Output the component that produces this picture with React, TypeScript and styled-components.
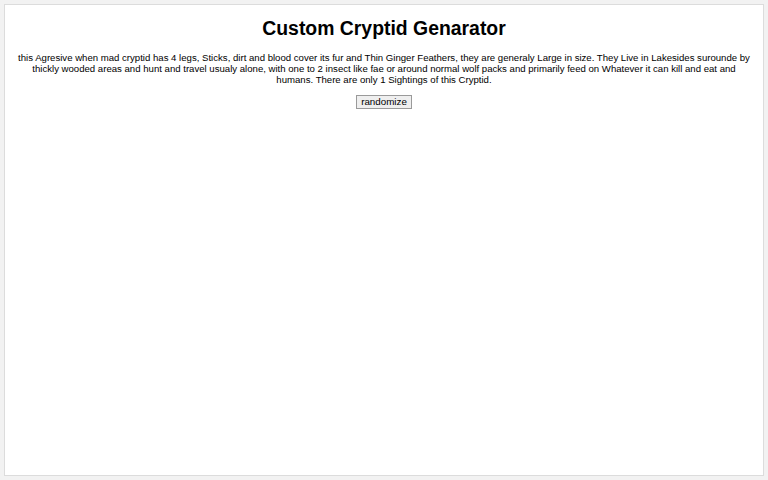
import React, { useState } from "react";
import styled, { createGlobalStyle } from "styled-components";

const Global = createGlobalStyle`
  html, body { margin: 0; padding: 0; }
  body {
    background: #f2f2f2;
    font-family: "Liberation Sans", Arial, sans-serif;
    color: #000;
  }
`;

const Page = styled.div`
  padding: 4px;
  height: 480px;
  box-sizing: border-box;
  display: flex;
`;

const Card = styled.main`
  flex: 1;
  background: #fff;
  border: 1px solid #dcdcdc;
  display: flex;
  flex-direction: column;
  align-items: center;
  padding: 0 13px;
`;

const Title = styled.h1`
  margin: 12px 0 0;
  font-size: 19.4px;
  font-weight: bold;
  line-height: 23px;
`;

const Story = styled.p`
  margin: 12px 0 0;
  font-size: 9.6px;
  line-height: 11px;
  text-align: center;
`;

const Button = styled.button`
  margin-top: 10px;
  font-family: "Liberation Sans", Arial, sans-serif;
  font-size: 9.8px;
  line-height: 12px;
  padding: 0 4px;
  background: #efefef;
  border: 1px solid #9a9a9a;
  border-radius: 0;
  color: #000;
`;

const story =
  "this Agresive when mad cryptid has 4 legs, Sticks, dirt and blood cover its fur and Thin Ginger Feathers, they are generaly Large in size. They Live in Lakesides surounde by thickly wooded areas and hunt and travel usualy alone, with one to 2 insect like fae or around normal wolf packs and primarily feed on Whatever it can kill and eat and humans. There are only 1 Sightings of this Cryptid.";

export default function App() {
  const [text] = useState(story);
  return (
    <>
      <Global />
      <Page>
        <Card>
          <Title>Custom Cryptid Genarator</Title>
          <Story>{text}</Story>
          <Button type="button">randomize</Button>
        </Card>
      </Page>
    </>
  );
}
